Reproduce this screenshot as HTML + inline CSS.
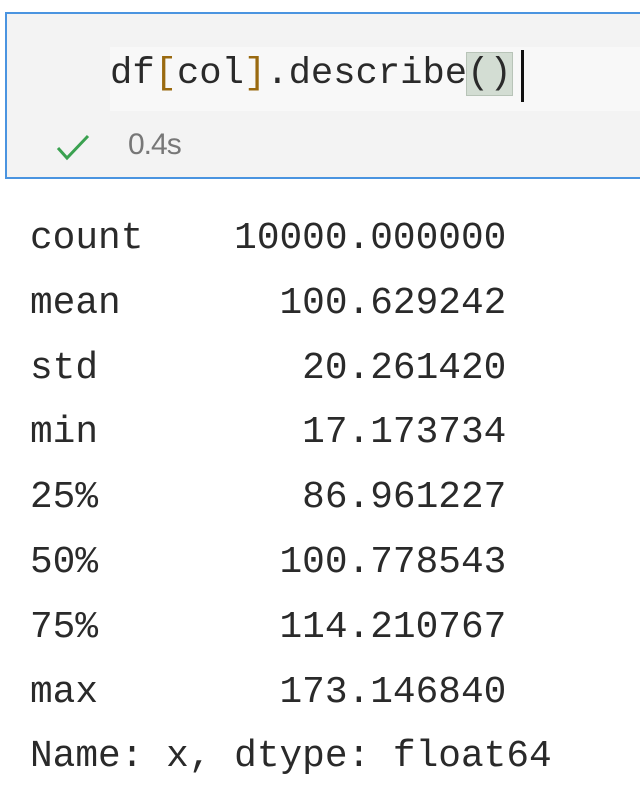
<!DOCTYPE html>
<html><head><style>
body{margin:0;width:640px;height:795px;background:#fff;position:relative;overflow:hidden;font-family:"Liberation Mono",monospace;}
.cell{position:absolute;left:5px;top:12px;width:650px;height:163px;border:2px solid #4a94e0;background:#f3f3f3;}
.strip{position:absolute;left:103px;top:33px;width:560px;height:64px;background:#f8f8f8;}
.code{position:absolute;left:110px;top:50px;font-size:37.2px;line-height:48px;color:#2a2a2a;white-space:pre;}
.hl{background:#d3ddd3;outline:1px solid #b8c4b8;}
.br{color:#9a6a10;}
.cur{position:absolute;left:521px;top:50px;width:3px;height:52px;background:#111;}
.t{position:absolute;left:128px;top:128px;font-family:"Liberation Sans",sans-serif;font-size:30px;color:#777;letter-spacing:-1px;}
pre{position:absolute;left:30px;top:207px;margin:0;font-size:37.8px;line-height:64.8px;color:#2a2a2a;}
</style></head><body>
<div class="cell"><div class="strip"></div></div>
<div class="code">df<span class="br">[</span>col<span class="br">]</span>.describe<span class="hl">()</span></div>
<div class="cur"></div>
<svg style="position:absolute;left:55px;top:133px" width="36" height="28"><path d="M3 15 L12 25 L33 3" stroke="#3aa150" stroke-width="3" fill="none"/></svg>
<div class="t">0.4s</div>
<pre>count    10000.000000
mean       100.629242
std         20.261420
min         17.173734
25%         86.961227
50%        100.778543
75%        114.210767
max        173.146840
Name: x, dtype: float64</pre>
</body></html>
